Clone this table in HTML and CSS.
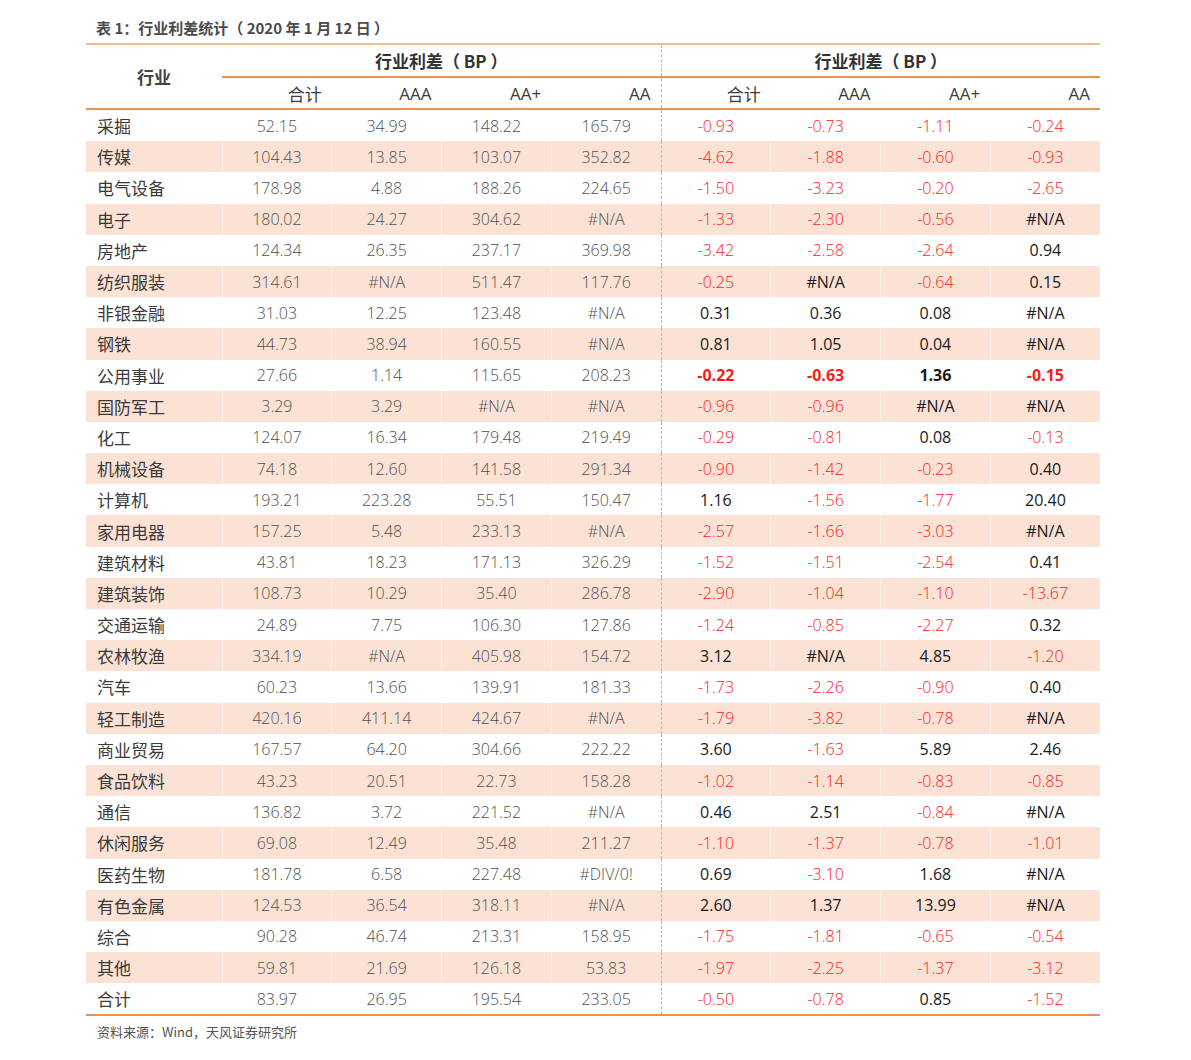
FILE: index.html
```html
<!DOCTYPE html>
<html lang="zh">
<head>
<meta charset="utf-8">
<title>行业利差统计</title>
<link rel="stylesheet" href="styles.css">
</head>
<body>
<div class="page">
  <div class="title">表 1：行业利差统计（ 2020 年 1 月 12 日 ）</div>
  <table class="tbl">
    <colgroup>
      <col class="c-name"><col class="c-v"><col class="c-v"><col class="c-v"><col class="c-v">
      <col class="c-v"><col class="c-v"><col class="c-v"><col class="c-v">
    </colgroup>
    <thead>
      <tr class="h1">
        <th rowspan="2" class="hname">行业</th>
        <th colspan="4" class="grp"><span>行业利差（ BP ）</span></th>
        <th colspan="4" class="grp sep"><span>行业利差（ BP ）</span></th>
      </tr>
      <tr class="h2">
        <th>合计</th><th>AAA</th><th>AA+</th><th>AA</th>
        <th class="sep">合计</th><th>AAA</th><th>AA+</th><th>AA</th>
      </tr>
    </thead>
    <tbody>
      <tr><td>采掘</td><td>52.15</td><td>34.99</td><td>148.22</td><td>165.79</td><td class="sep r">-0.93</td><td class="r">-0.73</td><td class="r">-1.11</td><td class="r">-0.24</td></tr>
      <tr class="alt"><td>传媒</td><td>104.43</td><td>13.85</td><td>103.07</td><td>352.82</td><td class="sep r">-4.62</td><td class="r">-1.88</td><td class="r">-0.60</td><td class="r">-0.93</td></tr>
      <tr><td>电气设备</td><td>178.98</td><td>4.88</td><td>188.26</td><td>224.65</td><td class="sep r">-1.50</td><td class="r">-3.23</td><td class="r">-0.20</td><td class="r">-2.65</td></tr>
      <tr class="alt"><td>电子</td><td>180.02</td><td>24.27</td><td>304.62</td><td>#N/A</td><td class="sep r">-1.33</td><td class="r">-2.30</td><td class="r">-0.56</td><td class="k">#N/A</td></tr>
      <tr><td>房地产</td><td>124.34</td><td>26.35</td><td>237.17</td><td>369.98</td><td class="sep r">-3.42</td><td class="r">-2.58</td><td class="r">-2.64</td><td class="k">0.94</td></tr>
      <tr class="alt"><td>纺织服装</td><td>314.61</td><td>#N/A</td><td>511.47</td><td>117.76</td><td class="sep r">-0.25</td><td class="k">#N/A</td><td class="r">-0.64</td><td class="k">0.15</td></tr>
      <tr><td>非银金融</td><td>31.03</td><td>12.25</td><td>123.48</td><td>#N/A</td><td class="sep k">0.31</td><td class="k">0.36</td><td class="k">0.08</td><td class="k">#N/A</td></tr>
      <tr class="alt"><td>钢铁</td><td>44.73</td><td>38.94</td><td>160.55</td><td>#N/A</td><td class="sep k">0.81</td><td class="k">1.05</td><td class="k">0.04</td><td class="k">#N/A</td></tr>
      <tr><td>公用事业</td><td>27.66</td><td>1.14</td><td>115.65</td><td>208.23</td><td class="sep r b">-0.22</td><td class="r b">-0.63</td><td class="k b">1.36</td><td class="r b">-0.15</td></tr>
      <tr class="alt"><td>国防军工</td><td>3.29</td><td>3.29</td><td>#N/A</td><td>#N/A</td><td class="sep r">-0.96</td><td class="r">-0.96</td><td class="k">#N/A</td><td class="k">#N/A</td></tr>
      <tr><td>化工</td><td>124.07</td><td>16.34</td><td>179.48</td><td>219.49</td><td class="sep r">-0.29</td><td class="r">-0.81</td><td class="k">0.08</td><td class="r">-0.13</td></tr>
      <tr class="alt"><td>机械设备</td><td>74.18</td><td>12.60</td><td>141.58</td><td>291.34</td><td class="sep r">-0.90</td><td class="r">-1.42</td><td class="r">-0.23</td><td class="k">0.40</td></tr>
      <tr><td>计算机</td><td>193.21</td><td>223.28</td><td>55.51</td><td>150.47</td><td class="sep k">1.16</td><td class="r">-1.56</td><td class="r">-1.77</td><td class="k">20.40</td></tr>
      <tr class="alt"><td>家用电器</td><td>157.25</td><td>5.48</td><td>233.13</td><td>#N/A</td><td class="sep r">-2.57</td><td class="r">-1.66</td><td class="r">-3.03</td><td class="k">#N/A</td></tr>
      <tr><td>建筑材料</td><td>43.81</td><td>18.23</td><td>171.13</td><td>326.29</td><td class="sep r">-1.52</td><td class="r">-1.51</td><td class="r">-2.54</td><td class="k">0.41</td></tr>
      <tr class="alt"><td>建筑装饰</td><td>108.73</td><td>10.29</td><td>35.40</td><td>286.78</td><td class="sep r">-2.90</td><td class="r">-1.04</td><td class="r">-1.10</td><td class="r">-13.67</td></tr>
      <tr><td>交通运输</td><td>24.89</td><td>7.75</td><td>106.30</td><td>127.86</td><td class="sep r">-1.24</td><td class="r">-0.85</td><td class="r">-2.27</td><td class="k">0.32</td></tr>
      <tr class="alt"><td>农林牧渔</td><td>334.19</td><td>#N/A</td><td>405.98</td><td>154.72</td><td class="sep k">3.12</td><td class="k">#N/A</td><td class="k">4.85</td><td class="r">-1.20</td></tr>
      <tr><td>汽车</td><td>60.23</td><td>13.66</td><td>139.91</td><td>181.33</td><td class="sep r">-1.73</td><td class="r">-2.26</td><td class="r">-0.90</td><td class="k">0.40</td></tr>
      <tr class="alt"><td>轻工制造</td><td>420.16</td><td>411.14</td><td>424.67</td><td>#N/A</td><td class="sep r">-1.79</td><td class="r">-3.82</td><td class="r">-0.78</td><td class="k">#N/A</td></tr>
      <tr><td>商业贸易</td><td>167.57</td><td>64.20</td><td>304.66</td><td>222.22</td><td class="sep k">3.60</td><td class="r">-1.63</td><td class="k">5.89</td><td class="k">2.46</td></tr>
      <tr class="alt"><td>食品饮料</td><td>43.23</td><td>20.51</td><td>22.73</td><td>158.28</td><td class="sep r">-1.02</td><td class="r">-1.14</td><td class="r">-0.83</td><td class="r">-0.85</td></tr>
      <tr><td>通信</td><td>136.82</td><td>3.72</td><td>221.52</td><td>#N/A</td><td class="sep k">0.46</td><td class="k">2.51</td><td class="r">-0.84</td><td class="k">#N/A</td></tr>
      <tr class="alt"><td>休闲服务</td><td>69.08</td><td>12.49</td><td>35.48</td><td>211.27</td><td class="sep r">-1.10</td><td class="r">-1.37</td><td class="r">-0.78</td><td class="r">-1.01</td></tr>
      <tr><td>医药生物</td><td>181.78</td><td>6.58</td><td>227.48</td><td>#DIV/0!</td><td class="sep k">0.69</td><td class="r">-3.10</td><td class="k">1.68</td><td class="k">#N/A</td></tr>
      <tr class="alt"><td>有色金属</td><td>124.53</td><td>36.54</td><td>318.11</td><td>#N/A</td><td class="sep k">2.60</td><td class="k">1.37</td><td class="k">13.99</td><td class="k">#N/A</td></tr>
      <tr><td>综合</td><td>90.28</td><td>46.74</td><td>213.31</td><td>158.95</td><td class="sep r">-1.75</td><td class="r">-1.81</td><td class="r">-0.65</td><td class="r">-0.54</td></tr>
      <tr class="alt"><td>其他</td><td>59.81</td><td>21.69</td><td>126.18</td><td>53.83</td><td class="sep r">-1.97</td><td class="r">-2.25</td><td class="r">-1.37</td><td class="r">-3.12</td></tr>
      <tr><td>合计</td><td>83.97</td><td>26.95</td><td>195.54</td><td>233.05</td><td class="sep r">-0.50</td><td class="r">-0.78</td><td class="k">0.85</td><td class="r">-1.52</td></tr>
    </tbody>
  </table>
  <div class="source">资料来源：Wind，天风证券研究所</div>
</div>
</body>
</html>
```
FILE: styles.css
```css
html, body {
  margin: 0;
  padding: 0;
  background: #ffffff;
}

.page {
  width: 1014px;
  margin-left: 86px;
  padding-top: 17px;
  font-family: "Open Sans", "Noto Sans CJK SC", sans-serif;
  color: #333333;
}

.title {
  font-family: "Noto Sans CJK SC", sans-serif;
  font-size: 15px;
  font-weight: 700;
  color: #4a4a4a;
  line-height: 22px;
  padding-left: 10px;
  padding-bottom: 4px;
  border-bottom: 2px solid #f6b98c;
}

.tbl {
  width: 1014px;
  border-collapse: collapse;
  table-layout: fixed;
  border-bottom: 2px solid #ee8f4f;
}

.c-name { width: 136px; }
.c-v { width: 109.75px; }

.tbl th {
  font-family: "Noto Sans CJK SC", sans-serif;
  font-weight: 400;
  color: #3c3c3c;
  font-size: 17px;
  padding: 0;
}

.h1 { height: 32px; }
.h2 { height: 32px; }

.h1 .hname {
  text-align: left;
  padding-left: 51px;
  vertical-align: middle;
  font-weight: 700;
  color: #444444;
  border-bottom: 2px solid #ee8f4f;
}

.h1 .grp {
  font-weight: 700;
  color: #333333;
  text-align: center;
  border-bottom: 2px solid #ee8f4f;
}

.h2 th {
  text-align: right;
  padding-right: 10px;
  padding-top: 1px;
  border-bottom: 2px solid #ee8f4f;
  font-family: "Open Sans", "Noto Sans CJK SC", sans-serif;
}

.sep {
  border-left: 1px dashed #f2a877;
}

.tbl td {
  height: 31.2px;
  padding: 0;
  text-align: center;
  font-size: 16px;
  font-weight: 300;
  color: #505050;
  border-left: 1px solid transparent;
}

.tbl tbody tr.alt td {
  background: #fbe2d5;
  border-left-color: #fdeee6;
}

.tbl tbody td:first-child {
  text-align: left;
  padding-left: 11px;
  font-family: "Noto Sans CJK SC", sans-serif;
  font-weight: 400;
  font-size: 17px;
  color: #3a3a3a;
  border-left: none;
}

.tbl tbody td.sep,
.tbl tbody tr.alt td.sep {
  border-left: 1px dashed #f2a877;
}

.tbl td.r { color: #ff1a1a; }
.tbl td.k { color: #1a1a1a; font-weight: 400; }
.tbl td.b { font-weight: 700; }

.source {
  font-family: "Noto Sans CJK SC", sans-serif;
  font-size: 13px;
  color: #555555;
  padding-left: 11px;
  padding-top: 6px;
}
```
